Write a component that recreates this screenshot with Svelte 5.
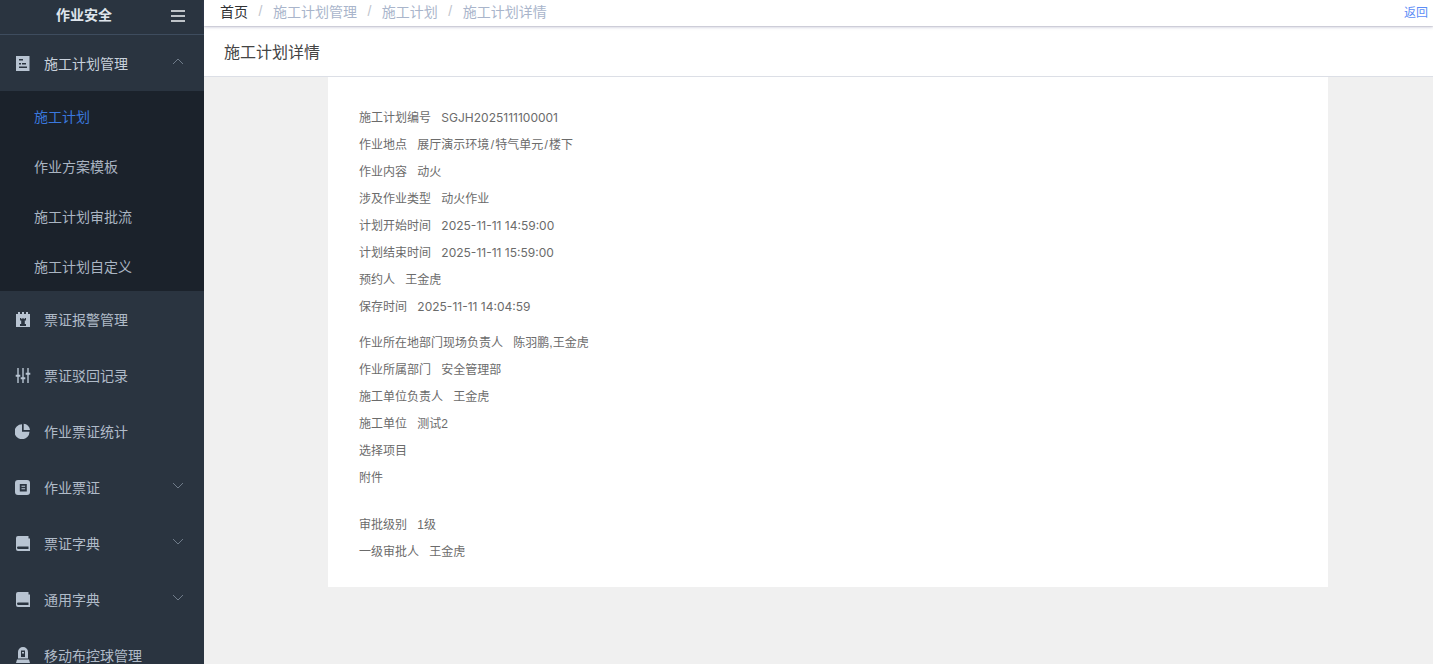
<script>
  const subItems = ['施工计划', '作业方案模板', '施工计划审批流', '施工计划自定义'];

  const menuItems = [
    { label: '票证报警管理', icon: 'castle' },
    { label: '票证驳回记录', icon: 'sliders' },
    { label: '作业票证统计', icon: 'pie' },
    { label: '作业票证', icon: 'ticket', arrow: true },
    { label: '票证字典', icon: 'book', arrow: true },
    { label: '通用字典', icon: 'book', arrow: true },
    { label: '移动布控球管理', icon: 'camera' }
  ];

  const crumbs = ['施工计划管理', '施工计划', '施工计划详情'];

  const groups = [
    [
      ['施工计划编号', 'SGJH2025111100001'],
      ['作业地点', '展厅演示环境/特气单元/楼下'],
      ['作业内容', '动火'],
      ['涉及作业类型', '动火作业'],
      ['计划开始时间', '2025-11-11 14:59:00'],
      ['计划结束时间', '2025-11-11 15:59:00'],
      ['预约人', '王金虎'],
      ['保存时间', '2025-11-11 14:04:59']
    ],
    [
      ['作业所在地部门现场负责人', '陈羽鹏,王金虎'],
      ['作业所属部门', '安全管理部'],
      ['施工单位负责人', '王金虎'],
      ['施工单位', '测试2'],
      ['选择项目', ''],
      ['附件', '']
    ],
    [
      ['审批级别', '1级'],
      ['一级审批人', '王金虎']
    ]
  ];

  // ids and dates are pure ascii, they get the narrower latin face
  const isLatin = (v) => /^[\x20-\x7e]+$/.test(v);
</script>

{#snippet icon(name)}
  <svg class="icon" viewBox="0 0 16 16" width="16" height="16">
    {#if name === 'list'}
      <path fill-rule="evenodd" d="M1 1h13.500v15H1zM4 4v1.500h4V4zM4 8v1.500h2V8zM7 8v1.500h4V8zM4 11.500V13h8v-1.500z"/>
    {:else if name === 'castle'}
      <path fill-rule="evenodd" d="M3 1h2v2h2V1h2v2h2V1h2v2h2v13H1V3h2zM5 7v2.500h1.200V13H5v2h6v-2H9.800V9.500H11V7H9.700v1H8.600V7H7.400v1H6.300V7z"/>
    {:else if name === 'sliders'}
      <path opacity="0.7" d="M2 1h2v15H2zM7 1h2v15H7zM12 1h2v15h-2z"/>
      <path d="M0.700 7.700h4.600v2H0.700zM5.700 10.300h4.600v2H5.700zM10.700 5.700h4.600v2h-4.600z"/>
    {:else if name === 'pie'}
      <path d="M7 1.200v7.500h7.500A7.500 7.500 0 1 1 7 1.200zM8.700 0.800a6.800 6.800 0 0 1 6.300 6.300H8.700z"/>
    {:else if name === 'ticket'}
      <path fill-rule="evenodd" d="M3 1h9a3 3 0 0 1 3 3v9a3 3 0 0 1-3 3H3a3 3 0 0 1-3-3V4a3 3 0 0 1 3-3zM4.800 5v7.400h7V5zM6.500 6.800h3.600v1H6.500zM6.500 9.200h3.600v1H6.500z"/>
    {:else if name === 'book'}
      <path fill-rule="evenodd" d="M3 1h10.500v10.500H3.500c-1 0-1.500 .6-1.500 1.200s.5 1.300 1.500 1.300h10V3.500H15V16H3a2 2 0 0 1-2-2V3a2 2 0 0 1 2-2z"/>
    {:else}
      <path fill-rule="evenodd" d="M8 0a5 5 0 0 1 5 5v6.500H3V5a5 5 0 0 1 5-5zM6 3.500V10h4V3.500zM7 5h2v1.500H7zM2 12.500h12l1 3.500H1z"/>
    {/if}
  </svg>
{/snippet}

{#snippet chevron(up)}
  <svg class="chevron" viewBox="0 0 12 7" width="12" height="7">
    <path d={up ? 'M1 6l5-5 5 5' : 'M1 1l5 5 5-5'} fill="none" stroke="currentColor" stroke-width="1"/>
  </svg>
{/snippet}

<div class="layout">
  <aside class="sidebar">
    <div class="brand">
      <span class="brand-name">作业安全</span>
      <svg class="burger" viewBox="0 0 14 12" width="14" height="12">
        <path d="M0 1h14M0 6h14M0 11h14" stroke="currentColor" stroke-width="1.500"/>
      </svg>
    </div>

    <nav class="menu">
      <div class="menu-item open">
        {@render icon('list')}
        <span class="menu-label">施工计划管理</span>
        {@render chevron(true)}
      </div>
      <div class="submenu">
        {#each subItems as item, i}
          <div class="sub-item" class:active={i === 0}>{item}</div>
        {/each}
      </div>
      {#each menuItems as item}
        <div class="menu-item">
          {@render icon(item.icon)}
          <span class="menu-label">{item.label}</span>
          {#if item.arrow}
            {@render chevron(false)}
          {/if}
        </div>
      {/each}
    </nav>
  </aside>

  <main class="main">
    <header class="topbar">
      <span class="crumb-home">首页</span>
      {#each crumbs as crumb}
        <span class="crumb-sep">/</span>
        <span class="crumb">{crumb}</span>
      {/each}
      <a class="back" href="#back">返回</a>
    </header>

    <div class="page-title">施工计划详情</div>

    <section class="card">
      {#each groups as rows}
        <div class="group">
          {#each rows as [label, value]}
            <div class="row">
              <span class="label">{label}</span>
              <span class="value" class:latin={isLatin(value)}>
                {#each value.split('/') as part, i}{#if i > 0}<span class="slash">/</span>{/if}{part}{/each}
              </span>
            </div>
          {/each}
        </div>
      {/each}
    </section>
  </main>
</div>

<style>
  :global(body) {
    margin: 0;
    overflow: hidden;
    background: #f0f0f0;
  }

  .layout {
    display: flex;
    height: 664px;
    overflow: hidden;
    font-family: "Liberation Sans", "Noto Sans CJK SC", sans-serif;
  }

  .sidebar {
    flex: 0 0 204px;
    background: #2a3440;
    overflow: hidden;
  }

  .brand {
    display: flex;
    align-items: center;
    justify-content: space-between;
    height: 31px;
    padding: 0 19px 3px 56px;
    border-bottom: 1px solid #3e4c5e;
    color: #dfe5ec;
    font-size: 14px;
    font-weight: 700;
  }

  .brand-name {
    margin-bottom: 3px;
  }

  .burger {
    color: #f0f2f5;
  }

  .menu {
    display: flex;
    flex-direction: column;
  }

  .menu-item {
    display: flex;
    align-items: center;
    flex: 0 0 56px;
    height: 56px;
    padding-left: 15px;
    color: #b0bbc8;
    font-size: 14px;
    position: relative;
  }

  .menu-item.open {
    color: #c9d2dc;
  }

  .icon {
    fill: #b8c4d2;
    flex: none;
  }

  .menu-label {
    margin-left: 13px;
  }

  .chevron {
    position: absolute;
    right: 20px;
    top: 23px;
    color: #6f7b89;
  }

  .submenu {
    background: #1b222b;
    display: flex;
    flex-direction: column;
  }

  .sub-item {
    height: 50px;
    line-height: 52px;
    padding-left: 34px;
    color: #aab5c2;
    font-size: 14px;
  }

  .sub-item.active {
    color: #3a78de;
  }

  .main {
    flex: 1;
    min-width: 0;
    display: flex;
    flex-direction: column;
  }

  .topbar {
    display: flex;
    align-items: center;
    height: 26px;
    padding: 0 5px 4px 16px;
    box-sizing: border-box;
    background: #fff;
    box-shadow: 0 1px 3px rgba(80, 80, 130, 0.35);
    font-size: 14px;
    position: relative;
    z-index: 1;
  }

  .crumb-home {
    color: #303133;
  }

  .crumb-sep {
    margin: 0 10.5px;
    color: #c0c4cc;
  }

  .crumb {
    color: #a9b5cb;
  }

  .back {
    margin-left: auto;
    color: #5c8df6;
    font-size: 12px;
    text-decoration: none;
  }

  .page-title {
    height: 50px;
    line-height: 52px;
    padding-left: 20px;
    box-sizing: border-box;
    background: #fff;
    border-bottom: 1px solid #dcdfe6;
    color: #444;
    font-size: 16px;
    margin-top: 1px;
  }

  .card {
    width: 1000px;
    height: 510px;
    margin-left: 124px;
    padding: 28px 31px 0;
    box-sizing: border-box;
    background: #fff;
  }

  .group {
    display: flex;
    flex-direction: column;
  }

  .group:nth-child(2) {
    margin-top: 9px;
  }

  .group:nth-child(3) {
    margin-top: 20px;
  }

  .row {
    height: 27px;
    line-height: 27px;
    font-size: 12px;
    color: #6b6b6b;
    white-space: nowrap;
  }

  .value {
    margin-left: 7px;
  }

  .value.latin {
    font-family: Inter, "Liberation Sans", sans-serif;
    line-height: 1;
  }

  .slash {
    padding: 0 1.25px;
  }
</style>
